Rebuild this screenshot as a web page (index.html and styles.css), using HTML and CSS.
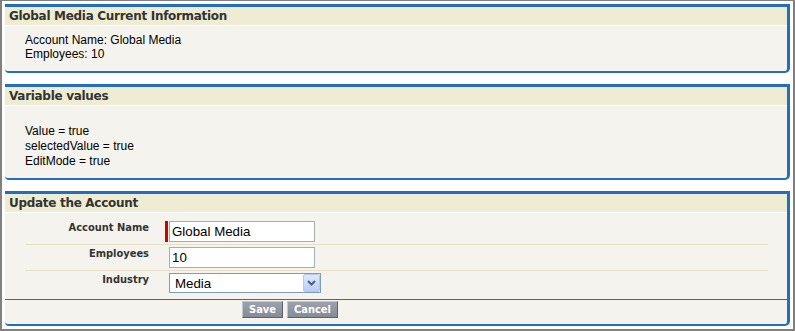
FILE: index.html
```html
<!DOCTYPE html>
<html lang="en">
<head>
    <meta charset="UTF-8">
    <title>Global Media</title>
    <link rel="stylesheet" href="styles.css">
</head>
<body>

    <div class="screen">

        <div class="block">
            <div class="block-head">Global Media Current Information</div>
            <div class="block-body info">
                <div>Account Name: Global Media</div>
                <div>Employees: 10</div>
            </div>
        </div>

        <div class="block">
            <div class="block-head">Variable values</div>
            <div class="block-body vars">
                <div>Value = true</div>
                <div>selectedValue = true</div>
                <div>EditMode = true</div>
            </div>
        </div>

        <div class="block last">
            <div class="block-head">Update the Account</div>
            <div class="form">
                <div class="row first">
                    <label class="label">Account Name</label>
                    <div class="field required">
                        <input class="input" type="text" value="Global Media">
                    </div>
                </div>
                <div class="row">
                    <label class="label">Employees</label>
                    <div class="field">
                        <input class="input" type="text" value="10">
                    </div>
                </div>
                <div class="row end">
                    <label class="label">Industry</label>
                    <div class="field">
                        <div class="select">
                            <span class="select-value">Media</span>
                            <span class="select-btn">
                                <svg width="15" height="16" viewBox="0 0 15 16">
                                    <path d="M4 6 L7.5 9.5 L11 6" fill="none" stroke="#4d6185" stroke-width="2"/>
                                </svg>
                            </span>
                        </div>
                    </div>
                </div>
            </div>
            <div class="buttons">
                <button class="btn">Save</button>
                <button class="btn">Cancel</button>
            </div>
        </div>

    </div>

</body>
</html>
```

FILE: styles.css
```css
* { box-sizing: border-box; margin: 0; padding: 0; }
body { font-family: "Liberation Sans", Arial, sans-serif; font-size: 12px; color: #000; background: #fff; }

.screen {
    width: 795px;
    height: 331px;
    border: solid #808080;
    border-width: 1px 2px 2px 2px;
    padding: 3px 3px 0 3px;
}

.block {
    background: #f5f3ee;
    border-top: 3px solid #236fbd;
    border-right: 3px solid #236fbd;
    border-bottom: 2px solid #236fbd;
    border-radius: 0 0 5px 4px;
    margin-bottom: 11px;
}

.block-head {
    height: 19px;
    background: #eeedd4;
    border-bottom: 1px solid #fff;
    padding-left: 4px;
    font: bold 12px "DejaVu Sans", sans-serif;
    letter-spacing: -0.3px;
    line-height: 18px;
    color: #333;
}

.block-body { padding-left: 20px; }
.info { padding-top: 7px; padding-bottom: 10px; line-height: 14px; }
.vars { padding-top: 18px; padding-bottom: 9px; line-height: 15px; }

.form { margin: 0 19px 0 20px; }

.row {
    display: grid;
    grid-template-columns: 130px 1fr;
    padding: 2px 0 2px 0;
    border-bottom: 1px solid #e6dfc5;
}
.row.first { padding-top: 8px; }
.row.end { border-bottom: none; padding-bottom: 6px; }

.label {
    text-align: right;
    padding-right: 6px;
    font: bold 11px "DejaVu Sans Condensed", "DejaVu Sans", sans-serif;
    line-height: 14px;
    color: #333;
}

.field { padding-left: 14px; }
.field.required { padding-left: 10px; }
.required { display: flex; }
.required::before {
    content: "";
    width: 3px;
    height: 21px;
    margin-right: 1px;
    background: #c00;
}

.input {
    width: 146px;
    height: 21px;
    border: 1px solid #a5acb2;
    background: #fff;
    padding: 0 2px;
    font: 13.3px "Liberation Sans", Arial, sans-serif;
    color: #000;
    outline: none;
}

.select {
    width: 152px;
    height: 20px;
    border: 1px solid #7f9db9;
    background: #fff;
    display: flex;
    align-items: center;
    justify-content: space-between;
    font: 13.3px "Liberation Sans", Arial, sans-serif;
}
.select-value { padding-left: 5px; }
.select-btn {
    width: 17px;
    height: 18px;
    border: 1px solid #b5c7ef;
    border-radius: 2px;
    background: linear-gradient(#e0e9fd, #b9cdf7);
    display: flex;
    align-items: center;
    justify-content: center;
}

.buttons {
    border-top: 1px solid #236fbd;
    padding: 1px 0 6px 237px;
    display: flex;
    gap: 4px;
}

.btn {
    height: 17px;
    padding: 0 6px;
    background: linear-gradient(#9da1ad, #868b98);
    border: 1px solid;
    border-color: #c3c6cd #5e616b #5e616b #c3c6cd;
    color: #fff;
    font: bold 11px "DejaVu Sans Condensed", "DejaVu Sans", sans-serif;
    line-height: 14px;
}
```
